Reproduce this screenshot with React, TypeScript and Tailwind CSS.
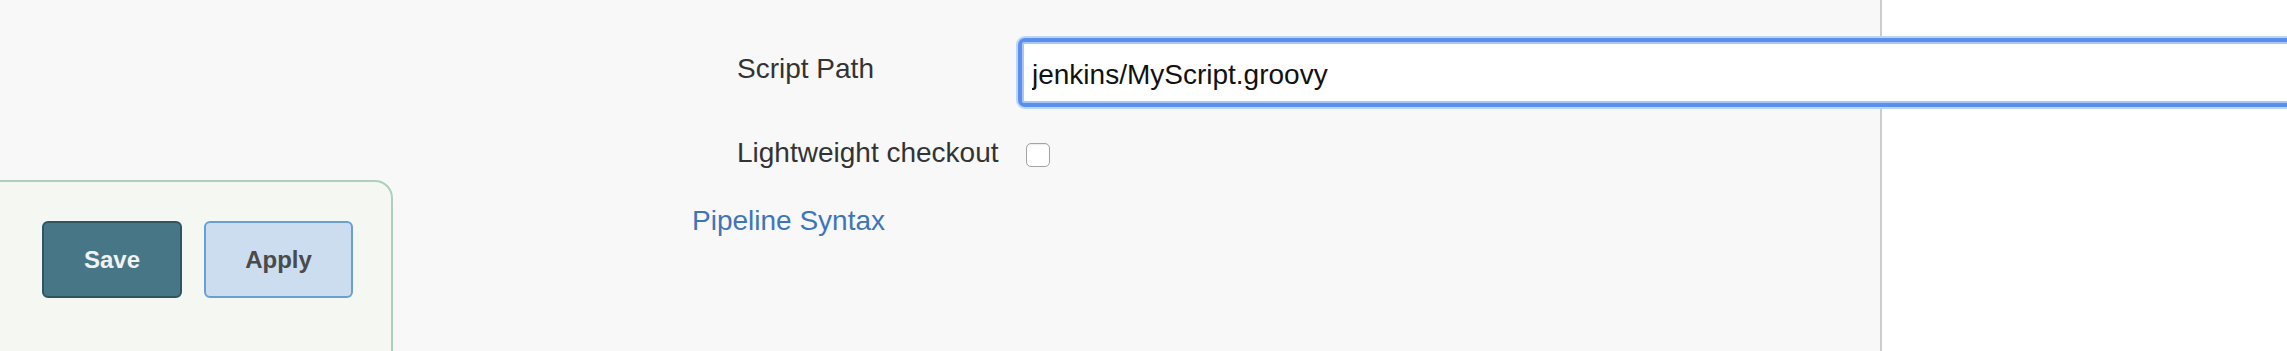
import React from 'react';

// Jenkins pipeline config: script path row, checkbox, link and the sticky save bar
export default function App() {
  return (
    <div className="flex h-[351px] w-[2287px] overflow-hidden bg-white font-['Liberation_Sans',Arial,sans-serif]">
      {/* main form area */}
      <div className="flex w-[1880px] shrink-0 bg-[#f8f8f8]">
        {/* bottom sticky bar with buttons */}
        <div className="flex w-[393px] shrink-0 flex-col">
          <div className="mt-[180px] flex-1 rounded-tr-[18px] border-t-2 border-r-2 border-[#acd0bd] bg-[#f5f8f2] pt-[39px] pl-[42px]">
            <div className="flex gap-[22px]">
              <button className="h-[77px] w-[140px] rounded-[6px] border-2 border-[#2f5563] bg-[#477787] text-[24px] font-bold text-[#f2f2f2]">
                Save
              </button>
              <button className="h-[77px] w-[149px] rounded-[6px] border-2 border-[#6a9fd6] bg-[#cbddef] text-[24px] font-bold text-[#4a4a4a]">
                Apply
              </button>
            </div>
          </div>
        </div>

        {/* form rows */}
        <div className="relative z-10 ml-[299px] flex flex-1 flex-col">
          <div className="mt-[38px] flex items-start">
            <label className="mt-[15px] ml-[45px] w-[281px] shrink-0 text-[28px] leading-[32px] text-[#333]">
              Script Path
            </label>
            <input
              type="text"
              defaultValue="jenkins/MyScript.groovy"
              className="h-[69px] w-[1320px] shrink-0 rounded-[7px] border-4 border-[#5b8fec] bg-white pt-[4px] pl-[10px] text-[28px] text-[#111] shadow-[0_0_0_2px_#bcd5fb,inset_0_0_0_2px_#a8c6f7] outline-none"
            />
          </div>

          <div className="mt-[30px] flex items-start">
            <label className="ml-[45px] w-[281px] shrink-0 text-[28px] leading-[32px] text-[#333]">
              Lightweight checkout
            </label>
            <span className="mt-[6px] ml-[8px] block h-[24px] w-[24px] rounded-[5px] border-[1.5px] border-[#a3a3a3] bg-white shadow-[inset_0_1px_1px_rgba(0,0,0,0.08)]" />
          </div>

          <a className="mt-[36px] text-[28px] leading-[32px] text-[#3f75b8]">
            Pipeline Syntax
          </a>
        </div>
      </div>

      {/* right side panel */}
      <div className="flex-1 border-l-2 border-[#cccccc] bg-white" />
    </div>
  );
}
